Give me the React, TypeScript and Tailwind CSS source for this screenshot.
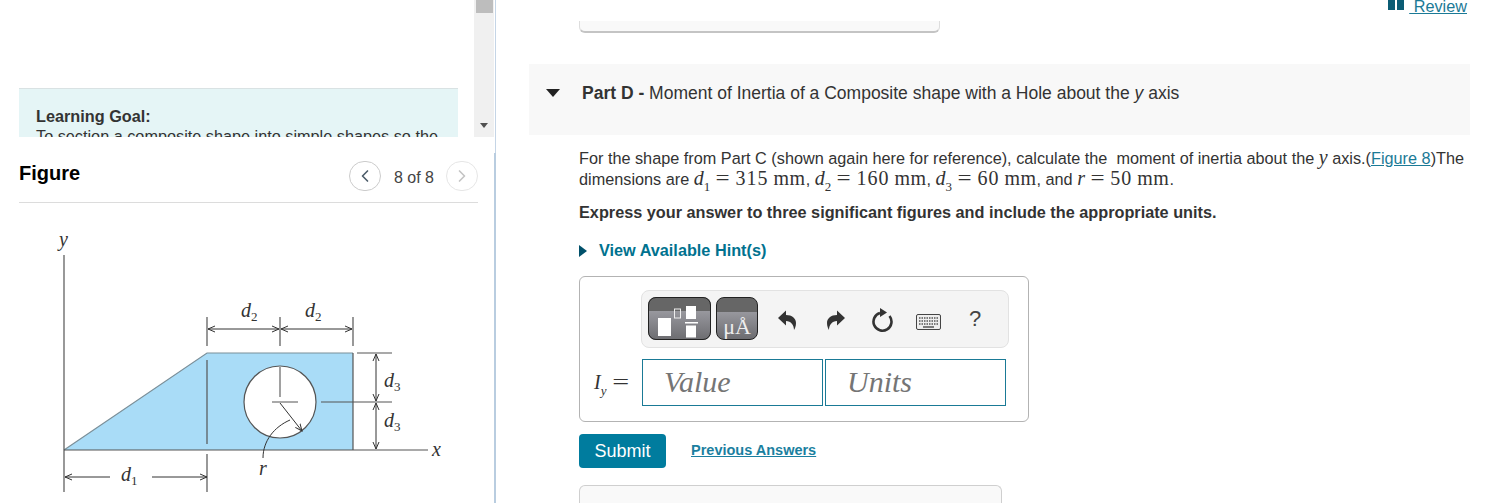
import { ChevronLeft, ChevronRight } from "lucide-react";

const sans = "font-['Liberation_Sans',Arial,sans-serif]";
const serif = "font-['Liberation_Serif','Times_New_Roman',serif]";

function Var({ name, sub }: { name: string; sub?: string }) {
  return (
    <span className={`${serif} text-[20px] italic leading-none`}>
      {name}
      {sub && <sub className="align-[-3px] text-[13px] not-italic leading-none">{sub}</sub>}
    </span>
  );
}

// "= 315 mm" part of an inline formula, the = is stretched a bit like the math font
function Eq({ num, unit }: { num: string; unit: string }) {
  return (
    <span className={`${serif} text-[20px] leading-none`}>
      <span className="mx-[7px] inline-block scale-x-125">=</span>
      <span className="tracking-[1px]">{num}</span> <span className="tracking-[0.5px]">{unit}</span>
    </span>
  );
}

function Diagram() {
  const line = "#555";
  return (
    <svg width="440" height="278" viewBox="30 225 440 278" className="block">
      <defs>
        <marker id="arr" markerWidth="8" markerHeight="8" refX="7" refY="4" orient="auto-start-reverse">
          <path d="M0 1 L7 4 L0 7" fill="none" stroke="#333" strokeWidth="1" />
        </marker>
      </defs>
      <path d="M64 450 L207 353 L353 353 L353 450 Z" fill="#a9dcf7" />
      <circle cx="280" cy="402" r="36" fill="#fff" stroke={line} strokeWidth="1.2" />
      <path d="M64 450 L207 353 L353 353" fill="none" stroke="#7b8f99" strokeWidth="1.2" />
      <path d="M64 255 V492 M64 450 H428 M353 353 V450 M207 360 V444 M207 454 V492 M207 317 V346 M280 317 V346 M353 317 V346" fill="none" stroke={line} strokeWidth="1.2" />
      <path d="M357 353 H392 M280 367 V397 M272 402 H298 M321 402 H392" fill="none" stroke={line} strokeWidth="1.1" />
      <g fill="none" stroke="#333" strokeWidth="1">
        <path d="M208 329 H279" markerStart="url(#arr)" markerEnd="url(#arr)" />
        <path d="M281 329 H352" markerStart="url(#arr)" markerEnd="url(#arr)" />
        <path d="M376 354 V401" markerStart="url(#arr)" markerEnd="url(#arr)" />
        <path d="M376 403 V449" markerStart="url(#arr)" markerEnd="url(#arr)" />
        <path d="M65 477 H110" markerStart="url(#arr)" />
        <path d="M152 477 H207" markerEnd="url(#arr)" />
        <path d="M280 403 L302 431" markerEnd="url(#arr)" />
        <path d="M263 458 C263 441 274 427 290 420" />
      </g>
      <g fontFamily="Liberation Serif, serif" fontStyle="italic" fill="#333" fontSize="20">
        <text x="59" y="246">y</text>
        <text x="241" y="317">d<tspan fontStyle="normal" fontSize="13" dy="4">2</tspan></text>
        <text x="305" y="317">d<tspan fontStyle="normal" fontSize="13" dy="4">2</tspan></text>
        <text x="384" y="387">d<tspan fontStyle="normal" fontSize="13" dy="4">3</tspan></text>
        <text x="384" y="427">d<tspan fontStyle="normal" fontSize="13" dy="4">3</tspan></text>
        <text x="121" y="481">d<tspan fontStyle="normal" fontSize="13" dy="4">1</tspan></text>
        <text x="259" y="475">r</text>
        <text x="432" y="456">x</text>
      </g>
    </svg>
  );
}

function LeftColumn() {
  return (
    <div className="flex w-[496px] shrink-0">
      <div className="flex w-[494px] flex-col">
        <div className="flex h-[137px] shrink-0">
          <div className="flex w-[474px] flex-col overflow-hidden pl-[19px] pr-4 pt-[88px]">
            <div className="h-[49px] overflow-hidden border-t border-[#d9e2e3] bg-[#e5f5f6] px-[17px] pt-[17px] text-[16.25px] leading-[20px] text-[#333]">
              <div className="font-bold">Learning Goal:</div>
              <div className="whitespace-nowrap">To section a composite shape into simple shapes so the</div>
            </div>
          </div>
          <div className="flex w-5 flex-col items-center justify-between bg-[#f0f0f0]">
            <div className="h-[13px] w-[17px] bg-[#bdbdbd]" />
            <div className="mb-[9px] h-0 w-0 border-x-[4px] border-t-[5px] border-x-transparent border-t-[#505050]" />
          </div>
        </div>
        <div className="ml-[19px] flex h-[66px] w-[459px] items-start justify-between border-b border-[#dcdcdc] pt-[24px]">
          <h2 className="text-[20px] font-bold leading-[25px] text-black">Figure</h2>
          <div className="flex items-center text-[16px] text-[#444]">
            <span className="flex h-[30px] w-[32px] items-center justify-center rounded-full border border-[#ccc] text-[#4d5d6a]">
              <ChevronLeft size={20} strokeWidth={2} />
            </span>
            <span className="ml-[13px] mr-[12px] mt-[4px]">8 of 8</span>
            <span className="flex h-[30px] w-[32px] items-center justify-center rounded-full border border-[#e6e6e6] text-[#c4c4c4]">
              <ChevronRight size={20} strokeWidth={2} />
            </span>
          </div>
        </div>
        <div className="flex-1 overflow-hidden pl-[30px] pt-[22px]">
          <Diagram />
        </div>
      </div>
      <div className="flex w-[2px] flex-col">
        <div className="ml-px h-[153px] w-px bg-[#c5d5e6]" />
        <div className="flex-1 bg-[#b9cde0]" />
      </div>
    </div>
  );
}

function Toolbar() {
  return (
    <div className="ml-[61px] flex h-[58px] w-[368px] items-center rounded-lg border border-[#e2e2e2] bg-[#f4f4f4] pl-[6px]">
      <svg width="63" height="43" viewBox="0 0 63 43" className="-mt-[1px] rounded-lg bg-[linear-gradient(#666_0_33%,#98989e_33%,#6c6c70)] outline outline-1 -outline-offset-1 outline-[#222]">
        <rect x="10" y="21" width="13" height="18" fill="#fff" />
        <rect x="26.5" y="12" width="6" height="9" fill="none" stroke="#eee" />
        <rect x="38" y="9" width="10" height="13" fill="#fff" />
        <rect x="37" y="25" width="13" height="1.5" fill="#fff" />
        <rect x="38" y="28.5" width="10" height="12" fill="#fff" />
      </svg>
      <div className={`${serif} -mt-[1px] ml-[5px] flex h-[43px] w-[42px] items-end justify-center rounded-lg border border-[#222] bg-[linear-gradient(#666_0_33%,#98989e_33%,#6c6c70)] text-[22px] leading-[24px] text-[#eee]`}>
        μÅ
      </div>
      <svg width="18" height="20" viewBox="0 0 18 20" className="ml-[20px] mt-[2px]">
        <path d="M0 8 L8 0.5 V5 C14 5 18 8.5 18 13 C18 16 17 18.5 16 20 C16 15 13 11 8 11 V15.5 Z" fill="#333" />
      </svg>
      <svg width="18" height="20" viewBox="0 0 18 20" className="ml-[31px] mt-[2px] -scale-x-100">
        <path d="M0 8 L8 0.5 V5 C14 5 18 8.5 18 13 C18 16 17 18.5 16 20 C16 15 13 11 8 11 V15.5 Z" fill="#333" />
      </svg>
      <svg width="24" height="24" viewBox="0 0 24 24" className="ml-[25px] mt-[2px]">
        <path d="M10 5 A9 9 0 1 0 19.5 8" fill="none" stroke="#333" strokeWidth="2.6" />
        <path d="M10 0 L17 4.5 L10 9 Z" fill="#333" />
      </svg>
      <svg width="25" height="16" viewBox="0 0 25 16" className="ml-[22px] mt-[6px]">
        <rect x="0.5" y="0.5" width="24" height="15" rx="1.5" fill="#eee" stroke="#444" />
        <path d="M3 4 H22 M3 7 H22 M3 10 H22" stroke="#555" strokeWidth="1.5" strokeDasharray="1.5 1" />
        <path d="M7 13 H18" stroke="#555" strokeWidth="1.5" />
      </svg>
      <span className="ml-[28px] text-[22px] leading-none text-[#444]">?</span>
    </div>
  );
}

function RightColumn() {
  return (
    <div className="min-w-0 flex-1 pl-[33px] pr-[31px] text-[16.25px] leading-[21px] text-[#333]">
      <div className="flex h-[64px] items-start justify-between">
        <div className="ml-[50px] mt-[21px] h-[12px] w-[361px] rounded-b-md border-b-2 border-x border-x-[#ddd] border-b-[#c4c4c4] bg-[#f9f9f9]" />
        <a className="-mt-[4px] mr-[3px] flex items-center text-[#1b7a96]">
          <svg width="16" height="11" viewBox="0 0 16 11" className="mb-[4px]">
            <path d="M0 0 H7 V11 H0 Z M9 0 H16 V11 H9 Z" fill="#0b5c74" />
          </svg>
          <span className="ml-[5px] underline">&nbsp;Review</span>
        </a>
      </div>
      <div className="flex h-[71px] items-start bg-[#f8f8f8] pt-[19px] text-[17.5px] leading-[21px]">
        <span className="ml-[17px] mr-[22px] mt-[6px] h-0 w-0 border-x-[7px] border-t-[8px] border-x-transparent border-t-[#222]" />
        <div className="text-[#333]">
          <b>Part D - </b>Moment of Inertia of a Composite shape with a Hole about the <i>y</i> axis
        </div>
      </div>
      <div className="pl-[50px]">
        <p className="mt-[12px] whitespace-nowrap leading-[20px]">
          For the shape from Part C (shown again here for reference), calculate the&nbsp; moment of inertia about the <Var name="y" /> axis.(
          <a className="text-[#1b7a96] underline">Figure 8</a>)The
          <br />
          dimensions are <Var name="d" sub="1" />
          <Eq num="315" unit="mm" />, <Var name="d" sub="2" />
          <Eq num="160" unit="mm" />, <Var name="d" sub="3" />
          <Eq num="60" unit="mm" />, and <Var name="r" />
          <Eq num="50" unit="mm" />.
        </p>
        <p className="mt-[12px] font-bold">Express your answer to three significant figures and include the appropriate units.</p>
        <div className="mt-[17px] flex h-[21px] items-center font-bold text-[#00728f]">
          <span className="mr-[12px] h-0 w-0 border-y-[6px] border-l-[8px] border-y-transparent border-l-[#00506a]" />
          View Available Hint(s)
        </div>
        <div className="mt-[15px] h-[146px] w-[450px] rounded-md border border-[#b3b3b3] pt-[13px]">
          <Toolbar />
          <div className="mt-[11px] flex items-center">
            <div className={`${serif} w-[62px] pl-[14px] text-[20px] whitespace-nowrap`}>
              <i>I</i>
              <sub className="align-[-3px] text-[13px] italic leading-none">y</sub>
              <span className="ml-[9px] inline-block scale-x-150">=</span>
            </div>
            <input readOnly placeholder="Value" className={`${serif} h-[47px] w-[181px] border border-[#1a7a96] pl-[21px] pb-[2px] text-[30px] italic outline-none placeholder:text-[#757575]`} />
            <input readOnly placeholder="Units" className={`${serif} ml-[2px] h-[47px] w-[181px] border border-[#1a7a96] pl-[21px] pb-[2px] text-[30px] italic outline-none placeholder:text-[#757575]`} />
          </div>
        </div>
        <div className="mt-[12px] flex items-center">
          <button className="h-[34px] w-[87px] rounded-sm bg-[#007c9e] text-[18px] text-white">Submit</button>
          <a className="ml-[25px] -mt-[2px] text-[14.5px] font-bold text-[#1b7fa0] underline">Previous Answers</a>
        </div>
        <div className="mt-[17px] h-[40px] w-[423px] rounded-t-md border border-b-0 border-[#cfcfcf] bg-[#f9f9f9]" />
      </div>
    </div>
  );
}

export default function App() {
  return (
    <div className={`${sans} flex h-[503px] w-[1501px] overflow-hidden bg-white`}>
      <LeftColumn />
      <RightColumn />
    </div>
  );
}
